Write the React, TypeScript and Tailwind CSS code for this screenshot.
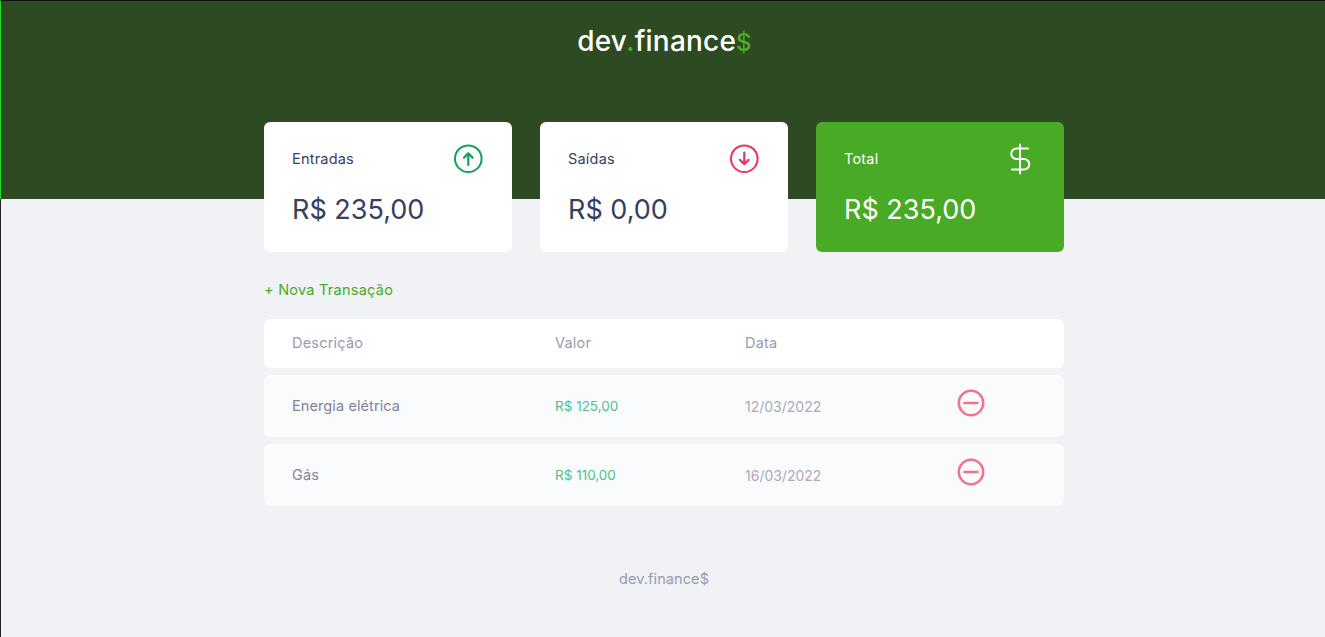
import React from "react";

const font = "font-['Inter','Noto_Sans',sans-serif]";

function Card({ label, value, icon, green }: { label: string; value: string; icon: React.ReactNode; green?: boolean }) {
  return (
    <div className={`h-[130px] w-[248px] rounded-md pt-6 pr-7 pl-7 ${green ? "bg-[#49aa26] text-white" : "bg-white text-[#363f5f]"}`}>
      <div className="flex h-[26px] items-center justify-between">
        <span className="text-[14.5px] leading-[26px] tracking-[0.2px]">{label}</span>
        {icon}
      </div>
      <div className="mt-[18px] text-[27px] leading-[40px]">{value}</div>
    </div>
  );
}

function Minus() {
  return (
    <svg width="28" height="28" viewBox="0 0 28 28" fill="none" stroke="#f0758c" strokeWidth="2.6">
      <circle cx="14" cy="14" r="12.2" />
      <path d="M7.500 14h13" strokeLinecap="round" />
    </svg>
  );
}

function Row({ d, v, t }: { d: string; v: string; t: string }) {
  return (
    <div className="grid h-[62px] grid-cols-[263px_190px_212px_1fr] items-center rounded-md bg-[#fafbfd] pl-7 text-[14px]">
      <span className="text-[14.5px] tracking-[0.1px] text-[#80849a]">{d}</span>
      <span className="text-[13.5px] text-[#53bf8c]">{v}</span>
      <span className="text-[#a9abb9]">{t}</span>
      <span className="-mt-[6px] block h-7"><Minus /></span>
    </div>
  );
}

export default function App() {
  return (
    <div className={`min-h-[637px] border-l border-l-[#222] bg-[#f0f2f5] pl-[2px] ${font}`}>
      <header className="-ml-[3px] h-[199px] border-t border-l border-t-[#111] border-l-[#1edb2a] bg-[#2d4a22] pt-[21px] pl-[3px] text-center">
        <h1 className="text-[28px] leading-[38px] font-medium tracking-[0.2px] text-white">
          dev<span className="text-[#49aa26]">.</span>finance<span className="text-[24px] text-[#49aa26]">$</span>
        </h1>
      </header>
      <main className="mx-auto -mt-[77px] w-[800px]">
        <section className="flex justify-between">
          <Card
            label="Entradas"
            value="R$ 235,00"
            icon={
              <svg width="30" height="30" viewBox="0 0 30 30" fill="none" stroke="#12a454" strokeWidth="2.200" strokeLinecap="round" strokeLinejoin="round">
                <circle cx="14.300" cy="14.700" r="13.300" strokeWidth="2" />
                <path d="M14.300 21V9.300M10 13.600l4.300-4.300 4.300 4.300" />
              </svg>
            }
          />
          <Card
            label="Saídas"
            value="R$ 0,00"
            icon={
              <svg width="30" height="30" viewBox="0 0 30 30" fill="none" stroke="#e8365f" strokeWidth="2.200" strokeLinecap="round" strokeLinejoin="round">
                <circle cx="14.300" cy="14.700" r="13.300" strokeWidth="2" />
                <path d="M14.300 8.500V20.200M10 15.900l4.300 4.300 4.300-4.300" />
              </svg>
            }
          />
          <Card
            label="Total"
            value="R$ 235,00"
            green
            icon={
              <svg width="32" height="32" viewBox="0 0 32 32" fill="none" stroke="white" strokeWidth="2" strokeLinecap="round" strokeLinejoin="round">
                <path d="M16 1.500v29M24 5.500H12.500a5.250 5.250 0 0 0 0 10.500h7.500a5.250 5.250 0 0 1 0 10.500H8" />
              </svg>
            }
          />
        </section>
        <a className="mt-[27px] block text-[14.5px] leading-[22px] tracking-[0.25px] text-[#49aa26]">+ Nova Transação</a>
        <section className="mt-[18px] flex flex-col gap-[7px]">
          <div className="grid h-[49px] grid-cols-[263px_190px_1fr] items-center rounded-md bg-white pb-[2px] pl-7 text-[14.5px] tracking-[0.2px] text-[#969cb3]">
            <span>Descrição</span>
            <span>Valor</span>
            <span>Data</span>
          </div>
          <Row d="Energia elétrica" v="R$ 125,00" t="12/03/2022" />
          <Row d="Gás" v="R$ 110,00" t="16/03/2022" />
        </section>
        <footer className="mt-[62px] text-center text-[14.5px] leading-[22px] tracking-[0.1px] text-[#969cb3]">dev.finance$</footer>
      </main>
    </div>
  );
}
